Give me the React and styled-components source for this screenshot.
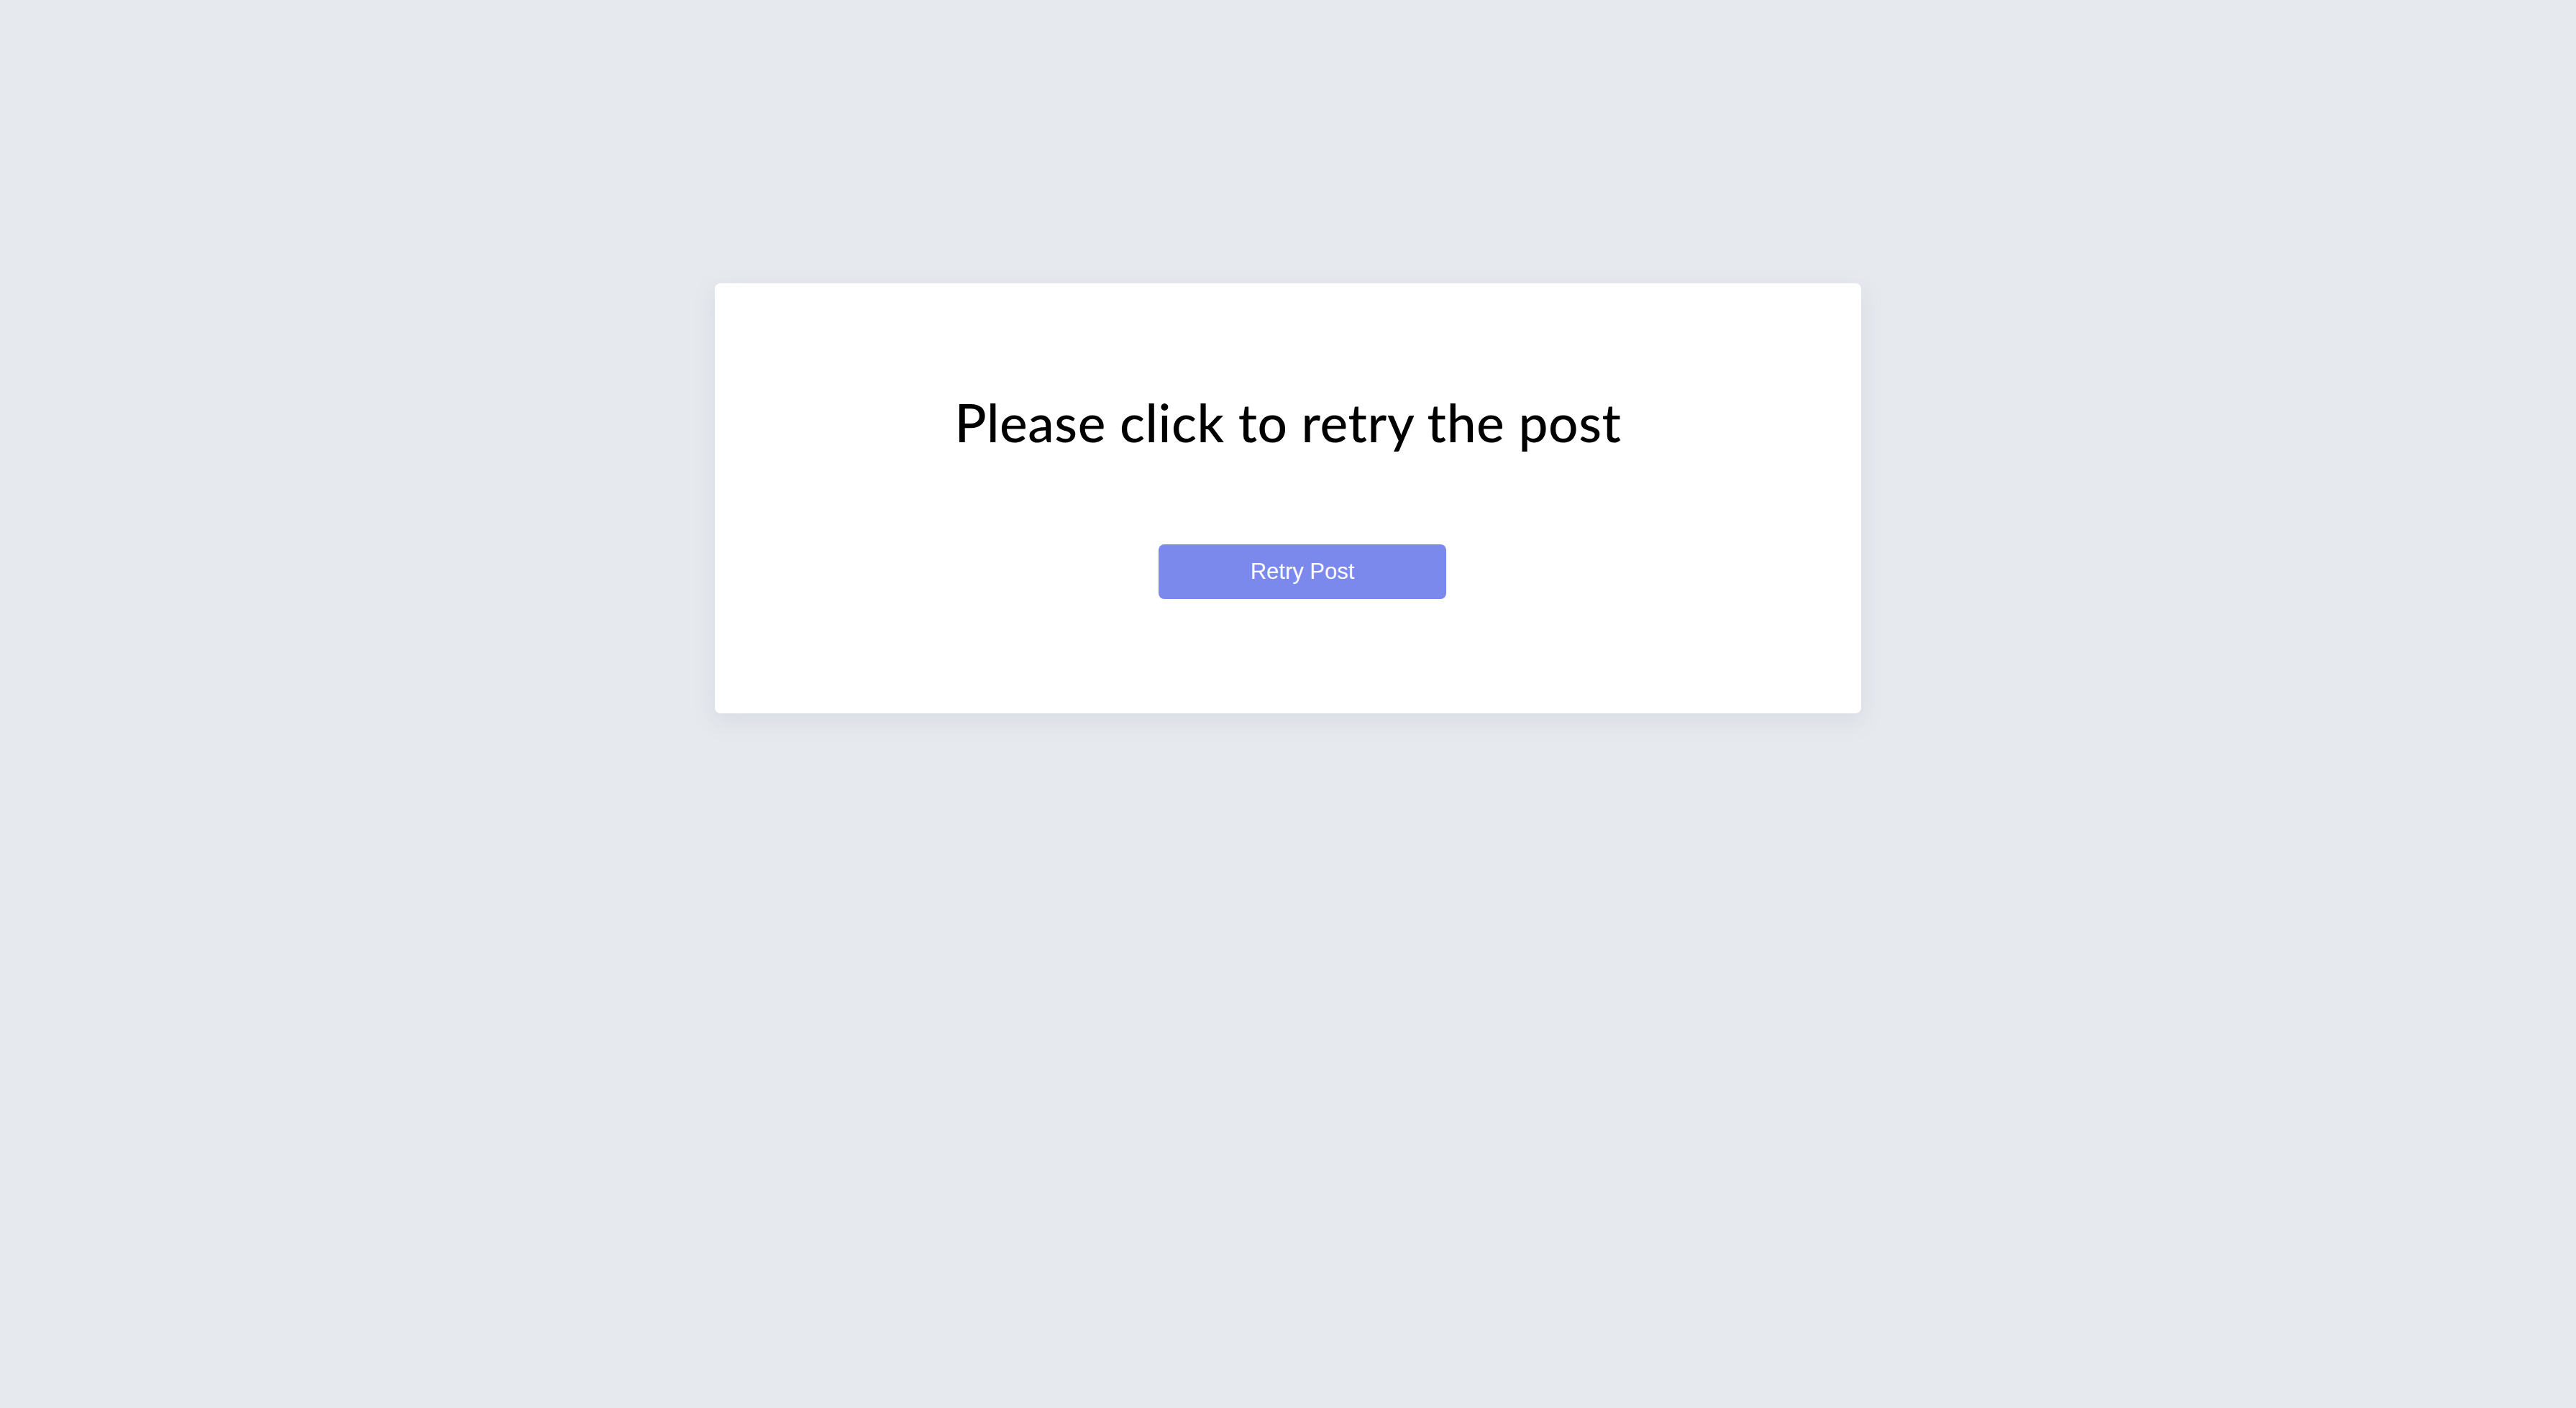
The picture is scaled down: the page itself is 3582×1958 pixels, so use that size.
import React from "react";
import styled, { createGlobalStyle } from "styled-components";

const GlobalStyle = createGlobalStyle`
  html, body {
    margin: 0;
    padding: 0;
    background: #e6e9ee;
  }
  body {
    min-height: 100vh;
    font-family: "Liberation Sans", Arial, sans-serif;
  }
`;

const Page = styled.div`
  display: flex;
  justify-content: center;
  padding-top: 394px;
  min-height: 100vh;
  box-sizing: border-box;
`;

const Card = styled.div`
  width: 1594px;
  height: 598px;
  box-sizing: border-box;
  background: #ffffff;
  border-radius: 8px;
  box-shadow: 0 10px 30px rgba(150, 160, 180, 0.18);
  display: flex;
  flex-direction: column;
  align-items: center;
  padding-top: 150px;
`;

const Title = styled.h1`
  margin: 0;
  font-family: Lato, "Noto Sans", sans-serif;
  font-weight: 500;
  font-size: 73px;
  letter-spacing: 0.6px;
  line-height: 86px;
  color: #000;
`;

const RetryButton = styled.button`
  margin-top: 127px;
  margin-left: 40px;
  width: 400px;
  height: 76px;
  border: none;
  border-radius: 8px;
  background: #7b88ec;
  color: #fff;
  font-family: "Liberation Sans", Arial, sans-serif;
  font-size: 31px;
  cursor: pointer;
`;

export default function App() {
  return (
    <>
      <GlobalStyle />
      <Page>
        <Card>
          <Title>Please click to retry the post</Title>
          <RetryButton>Retry Post</RetryButton>
        </Card>
      </Page>
    </>
  );
}
